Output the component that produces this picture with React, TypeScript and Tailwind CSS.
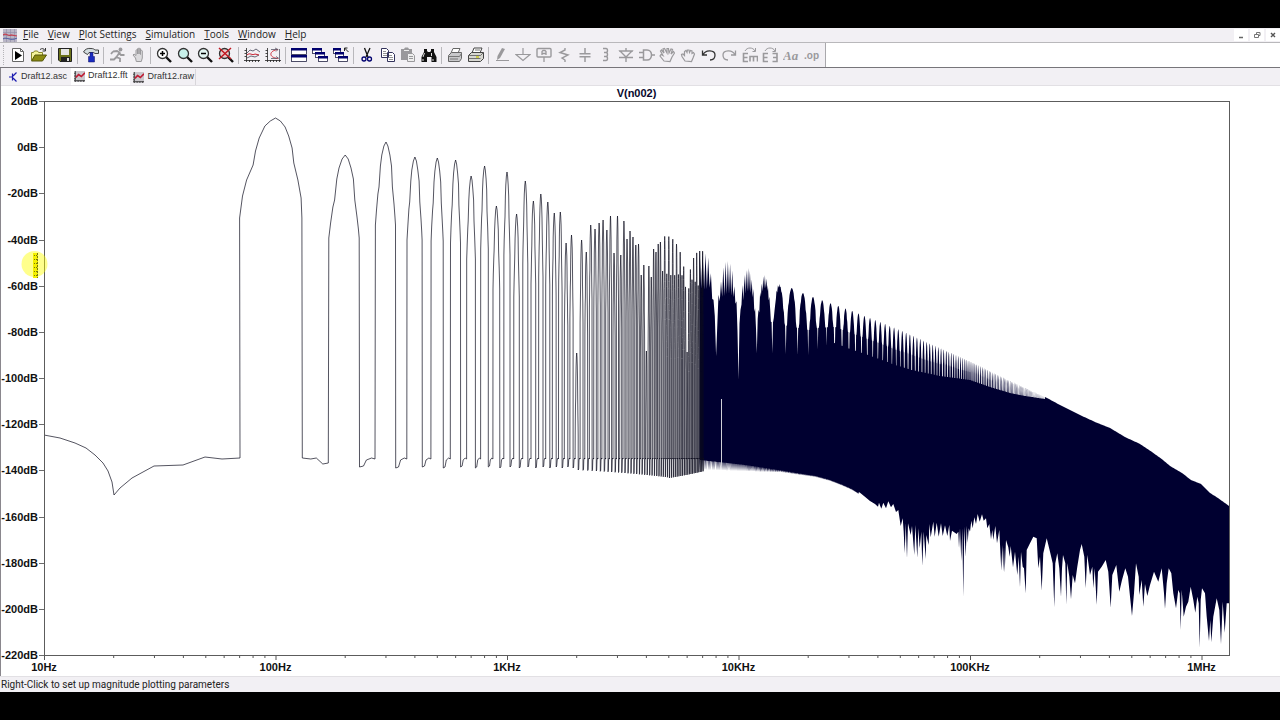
import type { ReactNode } from "react";

const MENU_ITEMS = ["File", "View", "Plot Settings", "Simulation", "Tools", "Window", "Help"];

/* ---------- Spectrum data ---------- */

type Point = [number, number];

const DECADE = 231.5;
const freqToX = (f: number) => 44 + DECADE * Math.log10(f / 10);
const dbToY = (db: number) => 101 + ((20 - db) * 554) / 240;

// Height of the first harmonics, starting at 100 Hz
const PEAKS = [
  118, 155, 142, 157, 158, 160, 176, 166, 206, 172, 214, 181, 201, 194, 202, 213, 212, 243, 235, 353,
  240, 252, 225, 229, 223, 220, 230, 216, 253, 216, 255, 221, 239, 231, 237, 245, 244, 275, 265, 351,
  266, 277, 249, 252, 244, 242,
];

const ENVELOPE: Point[] = [
  [660, 234], [670, 237], [702, 251], [728, 261], [748, 268], [765, 275], [779, 284], [792, 288],
  [803, 293], [813, 297], [850, 310], [900, 330], [940, 348], [970, 361], [1000, 376], [1045, 397],
  [1062, 406], [1080, 415], [1095, 422], [1110, 428], [1125, 437], [1140, 444], [1152, 452], [1163, 460],
  [1170, 466], [1182, 473], [1191, 480], [1201, 484], [1210, 493], [1218, 498], [1229, 506],
];

const DIPS: Point[] = [
  [687, 352], [716, 356], [739, 380], [757, 353], [772, 353], [798, 355], [809, 355], [820, 348],
  [835, 343], [850, 349], [868, 355], [885, 361], [895, 365], [912, 370], [940, 376], [970, 380],
  [990, 387], [1010, 393], [1025, 396], [1045, 399],
];

const FLOOR: Point[] = [
  [690, 458], [700, 460], [745, 465], [780, 470], [800, 473], [815, 475], [830, 479], [843, 484],
  [852, 488], [860, 493],
];

// Lower edge of the filled area above 33 kHz, three units to the pixel
const LOWER_EDGE: Point[] = [
  [0, 98], [12, 108], [30, 123], [45, 132], [54, 140], [57, 128], [64, 146], [70, 128], [78, 145],
  [85, 124], [93, 142], [100, 132], [108, 156], [115, 150], [122, 198], [128, 175], [131, 215], [134, 280],
  [137, 190], [141, 295], [144, 190], [152, 225], [156, 198], [163, 285], [166, 195], [172, 293],
  [175, 205], [179, 265], [184, 215], [187, 318], [191, 215], [197, 298], [199, 225], [206, 255],
  [208, 192], [212, 232], [220, 185], [224, 230], [230, 188], [236, 230], [243, 190], [248, 228],
  [255, 196], [262, 228], [268, 195], [270, 243], [276, 212], [290, 222], [295, 215], [297, 265],
  [300, 205], [304, 303], [307, 205], [310, 410], [313, 200], [317, 290], [320, 198], [323, 248],
  [326, 205], [330, 215], [334, 182], [338, 205], [343, 172], [348, 192], [353, 162], [359, 185],
  [366, 163], [371, 182], [378, 175], [382, 205], [388, 192], [393, 238], [397, 210], [400, 240],
  [406, 198], [411, 250], [418, 210], [424, 332], [427, 255], [430, 335], [432, 260], [434, 338],
  [438, 240], [445, 262], [449, 290], [452, 258], [459, 322], [465, 275], [472, 345], [476, 290],
  [480, 382], [483, 275], [488, 320], [492, 325], [497, 400], [500, 270], [510, 250], [520, 230],
  [530, 235], [535, 325], [540, 290], [545, 392], [550, 280], [560, 235], [570, 275], [578, 310],
  [583, 442], [586, 310], [592, 280], [598, 325], [603, 410], [606, 325], [609, 285], [616, 310],
  [619, 434], [622, 310], [628, 350], [633, 418], [638, 345], [645, 370], [652, 320], [660, 270],
  [665, 252], [673, 290], [677, 385], [682, 285], [690, 345], [697, 320], [700, 385], [704, 325],
  [710, 435], [714, 335], [725, 320], [737, 300], [745, 335], [752, 443], [757, 345], [769, 315],
  [778, 395], [786, 360], [796, 325], [804, 350], [812, 430], [816, 468], [822, 400], [828, 310],
  [836, 350], [838, 405], [845, 360], [850, 440], [855, 372], [862, 408], [870, 375], [882, 335],
  [895, 365], [905, 325], [912, 400], [915, 447], [920, 370], [926, 325], [934, 340], [940, 400],
  [948, 445], [955, 390], [959, 400], [962, 510], [965, 390], [971, 470], [978, 440], [985, 425],
  [992, 380], [1000, 420], [1006, 458], [1012, 410], [1016, 430], [1019, 563], [1022, 420], [1026, 385],
  [1035, 400], [1040, 470], [1047, 543], [1051, 480], [1054, 547], [1060, 470], [1070, 415],
  [1078, 450], [1083, 553], [1088, 425], [1094, 518], [1100, 430], [1109, 430],
];

function interpolate(curve: Point[], x: number) {
  if (x <= curve[0][0]) return curve[0][1];
  for (let i = 1; i < curve.length; i++) {
    const [x1, y1] = curve[i];
    if (x <= x1) {
      const [x0, y0] = curve[i - 1];
      return y0 + ((y1 - y0) * (x - x0)) / (x1 - x0);
    }
  }
  return curve[curve.length - 1][1];
}

function peakY(n: number) {
  if (n <= PEAKS.length) return PEAKS[n - 1];
  const x = freqToX(n * 100);
  const top = interpolate(ENVELOPE, x);
  if (x > 1045) return top;
  const s = Math.abs(Math.sin((Math.PI * n) / 20));
  const dip = interpolate(DIPS, x);
  // every 20th harmonic vanishes
  const nearestNull = freqToX(Math.round(n / 20) * 2000);
  if (n % 20 === 0 || (n > 200 && Math.abs(x - nearestNull) < 0.4)) return dip;
  const odd = n % 2 === 1 ? Math.max(0, Math.min(38, 38 - (n - 80) * 0.5)) * s : 0;
  const spread = n > 75 ? 20 * (1 - s) + (n % 3 === 0 && n < 300 ? 10 * (1 - s) : 0) : 0;
  const limit = n > 120 ? top + (dip - top) * 0.58 : dip;
  return Math.min(limit, top - 46.2 * Math.log10(s) + odd + spread);
}

const toPath = (points: Point[]) => points.map(([x, y]) => `${x.toFixed(1)},${y.toFixed(1)}`).join(" ");

function lowY(n: number) {
  if (n === 1) return 458;
  if (n < 20) return 467 + (n % 2);
  return n < 50 ? 470 + (n - 20) / 4 : 478 - (n - 50) / 3;
}

function buildTrace() {
  const points: Point[] = [
    [44, 435], [60, 438], [75, 443], [86, 448], [95, 455], [103, 463], [108, 471], [112, 482], [114, 495],
    [120, 488], [132, 478], [154, 466], [183, 465], [205, 457], [222, 459], [240, 458],
  ];
  for (let n = 1; n <= 70; n++) {
    const top = peakY(n);
    const f = n * 100;
    const lobe: Point[] =
      n === 1
        ? [[-30, 100], [-28, 78], [-25, 62], [-20, 47], [-18, 33], [-15, 20], [-10, 8], [-5, 3], [0, 0], [5, 3], [10, 9], [14, 18], [18, 30], [20, 45], [25, 62], [29, 80], [30, 100]]
        : [[-30, 83], [-27, 68], [-23, 52], [-20, 45], [-16, 24], [-12, 13], [-6, 4], [0, 0], [6, 4], [12, 13], [17, 24], [20, 45], [25, 62], [28, 74], [30, 83]];
    lobe.forEach(([df, dy]) => points.push([freqToX(f + df), Math.min(top + dy, 450)]));
    const low = lowY(n);
    points.push([freqToX(f + 30.5), low]);
    if (n === 1) points.push([freqToX(142), 459], [freqToX(150), 458], [freqToX(160), 464], [freqToX(169), 463]);
    else points.push([freqToX(f + 40), low - 1], [freqToX(f + 47), 460], [freqToX(f + 60), 458], [freqToX(f + 69), 459]);
  }
  return toPath(points);
}

function buildFill() {
  const points: Point[] = [];
  for (let n = 68; n <= 4000; n++) {
    const x = freqToX(n * 100);
    if (x < 1046) points.push([x, peakY(n)]);
  }
  for (let x = 1046; x <= 1229; x++) points.push([x, interpolate(ENVELOPE, x)]);
  [...LOWER_EDGE].reverse().forEach(([u, v]) => points.push([860 + u / 3, 460 + v / 3]));
  for (let n = 330; n >= 68; n--) {
    const x = freqToX(n * 100);
    const base = interpolate(FLOOR, x);
    const ripple = n < 150 ? 16 - n / 11 : 2;
    points.push([x + 0.4, base], [x, base + Math.max(2, ripple)], [x - 0.3, base]);
  }
  return toPath(points);
}

const TRACE = buildTrace();
const FILL = buildFill();

function Spectrum() {
  const levels = Array.from({ length: 13 }, (_, i) => 20 - i * 20);
  const decades = ["10Hz", "100Hz", "1KHz", "10KHz", "100KHz", "1MHz"];
  const minor: number[] = [];
  for (let d = 10; d < 1e6; d *= 10) for (let k = 2; k < 10; k++) minor.push(k * d);

  return (
    <svg
      viewBox="0 86 1280 590"
      className="block w-full font-['Liberation_Sans',sans-serif] text-[11px] font-bold"
      role="img"
      aria-label="V(n002)"
    >
      <text x="636.5" y="97" textAnchor="middle" fill="#08082c">V(n002)</text>
      <polygon points={FILL} fill="#000030" />
      <polyline points={TRACE} fill="none" stroke="#0c0c1c" strokeWidth="0.7" />
      <line x1="721.5" x2="721.5" y1="399" y2="466" stroke="#d0d0d8" />
      <rect x="44.5" y="101.5" width="1185" height="554" fill="none" stroke="#5c5c5c" />

      {levels.map((db) => (
        <g key={db}>
          <line x1="39" x2="44" y1={Math.round(dbToY(db)) + 0.5} y2={Math.round(dbToY(db)) + 0.5} stroke="#6c6c6c" />
          <text x="38" y={Math.round(dbToY(db)) + 4} textAnchor="end" fill="#111">{db}dB</text>
        </g>
      ))}
      {minor.map((f) => (
        <line key={f} x1={freqToX(f)} x2={freqToX(f)} y1="656" y2="658" stroke="#555" />
      ))}
      {decades.map((label, i) => (
        <g key={label}>
          <line x1={44.5 + i * DECADE} x2={44.5 + i * DECADE} y1="656" y2="660" stroke="#555" />
          <text x={44 + i * DECADE} y="671" textAnchor="middle" fill="#111">{label}</text>
        </g>
      ))}

      {/* Ruler cursor with click highlight */}
      <circle cx="34.5" cy="264" r="13" fill="#ffff00" opacity="0.45" />
      <rect x="33" y="253" width="5" height="25" fill="#f4f000" />
      <path d="M37.5 253V278" stroke="#77770a" strokeDasharray="2 1" />
      <path d="M34 255.5h3M34 259.5h3M34 263.5h3M34 267.5h3M34 271.5h3M34 275.5h3" stroke="#77770a" strokeDasharray="1 1" />
    </svg>
  );
}

/* ---------- Toolbar ---------- */

const GREY = "#9a999c";
const NAVY = "#00006e";

const Lens = ({ fill = "#d8f2ee" }: { fill?: string }) => (
  <>
    <path d="M10 10l5 5" stroke="#111" strokeWidth="2.4" />
    <circle cx="6.5" cy="6.5" r="5" fill={fill} stroke="#333" strokeWidth="1.3" />
  </>
);

const Pane = ({ x, y, w = 9, h = 5 }: { x: number; y: number; w?: number; h?: number }) => (
  <>
    <rect x={x + 0.5} y={y + 0.5} width={w} height={h} fill="#fff" stroke="#222244" strokeWidth=".8" />
    <rect x={x} y={y} width={w + 1} height="2.5" fill={NAVY} />
  </>
);

const Axes = () => (
  <path d="M2.5 1V15M0 13.5H16M.5 3.5h2M.5 6.5h2M.5 9.5h2M5.5 13v2M8.5 13v2M11.5 13v2M14.5 13v2" stroke="#222" strokeWidth=".8" />
);

const ICONS: Record<string, ReactNode> = {
  Run: (
    <>
      <path d="M2.5 1.5h8l3 3v10h-11z" fill="#fff" stroke="#666" />
      <path d="M10.5 1.5v3h3" stroke="#666" />
      <path d="M5 4l7 4.5L5 13z" fill="#000" />
    </>
  ),
  Open: (
    <>
      <path d="M.5 13V5.5h2l1-1.5h3l1 1.500h4V8" fill="#f5f59a" stroke="#88882a" />
      <path d="M.5 14l3.500-6H15.500l-4 6z" fill="#8c8c12" stroke="#55550a" />
      <path d="M9 2.500c2-1.500 4-1 5 1M14.500 1v3h-3" stroke="#333" />
    </>
  ),
  Save: (
    <>
      <path d="M1.500 1.500h13v13H3l-1.500-1.500z" fill="#6b711a" stroke="#222" />
      <path d="M4 2h8v6H4z" fill="#e4e4e4" />
      <path d="M4 10h9v4H4z" fill="#222" />
      <path d="M10 11h2v3h-2z" fill="#ddd" />
    </>
  ),
  "Control Panel": (
    <>
      <path d="M.5 5C2 2 5 1 8 1.500c2 0 3 .5 4 1.500h3.500v3.500H12L10.500 5.500H6L4.500 7.500 2 6z" fill="#d3dcdf" stroke="#333" strokeWidth=".9" />
      <path d="M7 5.500h3v4h1.500V15h-6V9.500H7z" fill="#1a2cc0" stroke="#101066" strokeWidth=".5" />
    </>
  ),
  Halt: (
    <>
      <circle cx="11.500" cy="2.500" r="1.900" fill={GREY} />
      <path d="M4 4.500l4-.5 2.500 1.500-3 4.500 3.500 1.500V15M7.500 10L5 12.500H1M10 6l2 2h3.500M4 4.500L2 7" stroke={GREY} strokeWidth="1.800" />
    </>
  ),
  Pause: (
    <path d="M4.500 11L2 8l1-1 2 1.500V3.500c0-1 1.500-1 1.500 0V7 2c0-1 1.500-1 1.500 0v5V2c0-1 1.500-1 1.500 0v5.500V4c0-1 1.800-1 1.800 0v7l-1 3.500h-5z" transform="translate(1 0)" fill="#dcdbde" stroke={GREY} />
  ),
  "Zoom in": (<><Lens fill="#fff" /><path d="M4 6.500h5M6.500 4v5" stroke="#000" strokeWidth="1.500" /></>),
  "Zoom area": <Lens fill="#c8f0ea" />,
  "Zoom out": (<><Lens fill="#e2f5f2" /><path d="M4 6.500h5" stroke="#000" strokeWidth="1.500" /></>),
  "Zoom full": (<><Lens fill="#e8cccc" /><path d="M1 1l12 11M13 1L1 12" stroke="#c01820" strokeWidth="1.500" /></>),
  Autorange: (
    <>
      <Axes />
      <path d="M3 6l3-3 3 1 3-2 4 3M3 11l4-2 4 1 4-2" stroke="#445" strokeWidth=".8" />
      <path d="M3 8c3-3 5 1 8-1l4 1" stroke="#c82030" />
    </>
  ),
  "Plot limits": (
    <>
      <Axes />
      <path d="M13 2.500c-9 1-10 8 0 9" stroke="#c82030" strokeWidth=".9" />
      <path d="M6 2.500h6M14.500 2v11M6 11.500h6M10 1l3 1.500-2 2M11 9.500l3 2" stroke="#556" strokeWidth=".8" />
    </>
  ),
  "Tile windows": (<><Pane x={0} y={1} w={15} h={6} /><Pane x={0} y={8} w={15} h={6} /></>),
  "Cascade windows": (<><Pane x={0} y={1} /><Pane x={3} y={5} /><Pane x={6} y={9} /></>),
  "Close windows": (<><Pane x={0} y={1} w={7} /><Pane x={2} y={5} w={8} /><Pane x={5} y={9} /><path d="M15.500 5l-4-4M11.500 4V1h3" stroke="#222" /></>),
  Cut: (
    <>
      <path d="M5.500 1l3.500 9M11 1L7 10" stroke="#111" strokeWidth="1.300" />
      <circle cx="5" cy="12" r="2" stroke={NAVY} strokeWidth="1.300" />
      <circle cx="10.500" cy="12" r="2" stroke={NAVY} strokeWidth="1.300" />
    </>
  ),
  Copy: (
    <>
      <path d="M1.500 1.500h5l2 2v7h-7zM7.500 5.500h5l2 2v7h-7z" fill="#fff" stroke="#33335c" />
      <path d="M3 4.500h3M3 6.500h4M3 8.500h4M9 8.500h3M9 10.500h4M9 12.500h4" stroke="#777" strokeWidth=".8" />
    </>
  ),
  Paste: (
    <>
      <path d="M1 2h3l1-1.500h3L9 2h3v11H1z" fill={GREY} />
      <path d="M4 3.500h5" stroke="#eee" />
      <path d="M7.500 6.500h5l2 2v6h-7z" fill="#eee" stroke={GREY} />
      <path d="M9 9.500h4M9 11.500h4" stroke={GREY} />
    </>
  ),
  Find: (
    <>
      <path d="M3 2h3v2l1 1h2l1-1V2h3v3l2.500 5v5h-5v-5H6v5H.500v-5L3 5z" fill="#111" />
      <path d="M3.500 6L2 10M10.500 6v3M2 12v2M12 12v2" stroke="#ddd" />
    </>
  ),
  "Print setup": (
    <>
      <path d="M4 6l2-4.500h7L11 6" fill="#fff" stroke="#666" />
      <path d="M1.500 8.500l3-3h10v6l-2 3h-11z" fill="#c8c8ca" stroke="#666" />
      <path d="M1.500 9.500h11l2-3M3 12h8" stroke="#777" />
    </>
  ),
  Print: (
    <>
      <path d="M4 6l2-5h8l-2 5" fill="#fff" stroke="#444" />
      <path d="M.500 8.500l3-3h12v6l-3 3h-12z" fill="#d8d8d2" stroke="#444" />
      <path d="M.500 8.500h12l3-3M.500 11.500h12M7 3h5" stroke="#555" strokeWidth=".8" />
      <path d="M8 10h3" stroke="#c8c820" strokeWidth="1.500" />
    </>
  ),
  Wire: (<><path d="M8 1l3 1-5 9-3 2 .5-4z" fill={GREY} /><path d="M2 13.500h13" stroke={GREY} /></>),
  Ground: <path d="M8 1v6M1 7.500h14l-7 6z" stroke={GREY} strokeWidth="1.200" />,
  Label: (
    <>
      <rect x="1" y="1.500" width="14" height="8.500" rx="1" stroke={GREY} strokeWidth="1.400" />
      <path d="M6 8V4.500L7 3.500h2l1 1V8M6 6.500h4M8 10v5" stroke={GREY} strokeWidth="1.300" />
    </>
  ),
  Resistor: <path d="M9 1v2L4 5.500l8 2.500-6 3 3 2v2" stroke={GREY} strokeWidth="1.400" />,
  Capacitor: <path d="M8 1v6M8 9.500V15M2.500 6.800h11M2.500 9.800h11" stroke={GREY} strokeWidth="1.500" />,
  Inductor: <path d="M6 1.500h3c2 0 2 4 0 4H7h2c2 0 2 4 0 4H7h2c2 0 2 4 0 4H6" stroke={GREY} strokeWidth="1.400" />,
  Diode: <path d="M8 1v3M2 4h12l-6 6zM1 10.500h14M8 10v5M1 4h14" stroke={GREY} strokeWidth="1.400" />,
  Component: <path d="M4.500 3H8c6 0 6 10 0 10H4.500zM0 5.500h4M0 10.500h4M12.500 8H16" stroke={GREY} strokeWidth="1.500" />,
  Move: (
    <path d="M5 14L1 9l1-1.500 2 1L1.500 4l1-1L5 6 4 2l1.500-.5L8 6V1.500h1.500L10 6l2-4 1.500.5L12 7l2.500-2.500L15.500 6 13 10l-2 4.500z" stroke={GREY} strokeWidth="1.200" />
  ),
  Drag: (
    <path d="M5 14L2 9.500l-.500-2L3 7l1.500 1.500V4.500L6 3.500l1 2 .500-2.500L9 3l.500 2.500 1-2 1.500.5V6.500l1.500-1L14.500 7 13 11l-1.500 3.500z" stroke={GREY} strokeWidth="1.200" />
  ),
  Undo: <path d="M1.500 3.500v4.500h4.500M2 8c2.500-6 12-5 12 0 0 3-2 5-5 5" stroke="#333" strokeWidth="1.300" />,
  Redo: <path d="M14.500 3.500v4.500H10M14 8C11.500 2 2 3 2 8c0 3 2 5 5 5" stroke={GREY} strokeWidth="1.300" />,
  Rotate: (
    <>
      <path d="M6 6.500H1.500v8H6M1.500 10.500h4M8 14.500V9.500h7.500v5M11.500 9.500v5" stroke={GREY} strokeWidth="1.600" />
      <path d="M3 4c2-4 8-4 10 0M13.500 1v3.500h-3" stroke={GREY} />
    </>
  ),
  Mirror: (
    <>
      <path d="M6 6.500H1.500v8H6M1.500 10.500h4M10.500 6.500H15v8h-4.500M15 10.500h-4" stroke={GREY} strokeWidth="1.600" />
      <path d="M3 4c2-4 8-4 10 0M13.500 1v3.500h-3" stroke={GREY} />
    </>
  ),
  Text: <text x="0" y="13" fontSize="13" fontStyle="italic" fontWeight="bold" fontFamily="Liberation Serif, serif" fill={GREY}>Aa</text>,
  "SPICE directive": <text x="0" y="12" fontSize="10" fontWeight="bold" fontFamily="Liberation Sans, sans-serif" fill={GREY}>.op</text>,
};

const GROUPS = [
  { width: "w-[41px]", items: ["Run", "Open"] },
  { width: "w-5", items: ["Save"] },
  { width: "w-5", items: ["Control Panel"] },
  { width: "w-[41px]", items: ["Halt", "Pause"] },
  { width: "w-[82px]", items: ["Zoom in", "Zoom area", "Zoom out", "Zoom full"] },
  { width: "w-[41px]", items: ["Autorange", "Plot limits"] },
  { width: "w-[62px]", items: ["Tile windows", "Cascade windows", "Close windows"] },
  { width: "w-[82px]", items: ["Cut", "Copy", "Paste", "Find"] },
  { width: "w-[41px]", items: ["Print setup", "Print"] },
  {
    width: "w-[330px]",
    items: [
      "Wire", "Ground", "Label", "Resistor", "Capacitor", "Inductor", "Diode", "Component",
      "Move", "Drag", "Undo", "Redo", "Rotate", "Mirror", "Text", "SPICE directive",
    ],
  },
];

function Toolbar() {
  return (
    <div className="flex h-[26px] border-y border-t-[#b9b8bb] border-b-[#77757a] bg-white">
      <div className="flex items-center border-r border-[#a9a8ac] bg-[#f2f0f4] pr-[3px]">
        <span className="mr-1 ml-[3px] h-5 border-l border-dotted border-[#b5b4b8]" />
        {GROUPS.map((group, i) => (
          <div key={i} className="flex items-center">
            {i > 0 && <span className="mr-[3px] ml-[2px] h-[17px] w-px bg-[#b9b8bc]" />}
            <div className={`flex ${group.width}`}>
              {group.items.map((name) => (
                <button key={name} aria-label={name} className="flex flex-1 items-center justify-center">
                  <svg viewBox="0 0 16 16" className="size-4 shrink-0" fill="none">
                    {ICONS[name]}
                  </svg>
                </button>
              ))}
            </div>
          </div>
        ))}
      </div>
    </div>
  );
}

/* ---------- Window chrome ---------- */

function PlotIcon({ className }: { className: string }) {
  return (
    <svg viewBox="0 0 12 12" className={className} fill="none">
      <rect width="12" height="12" fill="#c9c6cc" />
      <path d="M1.500 0v12M0 10.500h12M0 2.500h2M0 5.500h2M0 8.500h2M4.500 10v2M7.500 10v2M10.500 10v2" stroke="#444" />
      <path d="M2 7l3-3 3 2 4-4" stroke="#c01c34" strokeWidth="1.800" />
    </svg>
  );
}

function MenuBar() {
  return (
    <div className="flex h-[14px] items-center bg-[#f2f0f4]">
      <svg viewBox="0 0 14 13" className="mr-[6px] ml-[3px] h-[13px] w-[14px]" fill="none">
        <rect width="14" height="13" fill="#b9b6c6" />
        <path d="M0 3.500h14M0 6.500h14M0 9.500h14M3.500 0v13M7.500 0v13M11.500 0v13" stroke="#8f8ca4" strokeWidth=".6" />
        <path d="M0 6c3-3 5 2 8 0l6 1" stroke="#c44050" strokeWidth="1.200" />
        <path d="M0 10c4-3 7 3 14-1" stroke="#3a4a9c" strokeWidth=".8" />
      </svg>
      <nav className="flex gap-[9px] pb-[2px]">
        {MENU_ITEMS.map((item) => (
          <button key={item} className="leading-3">
            <span className="underline underline-offset-1">{item[0]}</span>
            {item.slice(1)}
          </button>
        ))}
      </nav>
      <div className="ml-auto flex gap-[2px] pb-px">
        <button aria-label="Minimize" className="flex h-3 w-[14px] justify-center bg-white">
          <svg viewBox="0 0 12 12" className="size-3" stroke="#666"><path d="M4 8.500h4" strokeWidth="1.500" /></svg>
        </button>
        <button aria-label="Restore" className="flex h-3 w-[14px] justify-center bg-white">
          <svg viewBox="0 0 12 12" className="size-3" fill="none" stroke="#777"><path d="M3.500 5.500h4v3h-4zM5.500 5V3.500h3.500v3H8" /></svg>
        </button>
        <button aria-label="Close" className="flex h-3 w-[14px] justify-center bg-white">
          <svg viewBox="0 0 12 12" className="size-3" stroke="#555"><path d="M4 4l4 4M8 4l-4 4" strokeWidth="1.400" /></svg>
        </button>
      </div>
    </div>
  );
}

function Tabs() {
  return (
    <div className="ml-px flex h-[18px] items-end border-b border-[#e2e0e4] bg-[#f2f0f4] pl-1 font-['Liberation_Sans',sans-serif] text-[9px] text-[#333]">
      <button className="flex h-4 items-center gap-1 pr-1 pl-1">
        <svg viewBox="0 0 8 12" className="h-3 w-2" fill="none" stroke="#1c1cb0">
          <path d="M0 6h3M3.500 2.500v7M4 5l3.500-3.500M4 7l3.500 3.500" strokeWidth="1.200" />
        </svg>
        Draft12.asc
      </button>
      <button className="flex h-[17px] items-center gap-[3px] bg-white px-[3px] pb-px">
        <PlotIcon className="size-[11px]" />
        Draft12.fft
      </button>
      <button className="flex h-4 items-center gap-[3px] border-r border-[#d8d6da] pr-px pl-[3px]">
        <PlotIcon className="size-[11px]" />
        Draft12.raw
      </button>
    </div>
  );
}

export default function App() {
  return (
    <div className="min-h-screen bg-black py-7">
      <div className="bg-[#f2f0f4] font-['Open_Sans','Noto_Sans',sans-serif] text-[10px] text-[#222]">
        <MenuBar />
        <Toolbar />
        <div className="bg-white shadow-[inset_1px_0_#8a878d]">
          <Tabs />
          <Spectrum />
        </div>
        <footer className="flex h-4 items-center border-t border-[#e2e0e4] px-px pt-px font-[Roboto,sans-serif] leading-3">
          Right-Click to set up magnitude plotting parameters
        </footer>
      </div>
    </div>
  );
}
